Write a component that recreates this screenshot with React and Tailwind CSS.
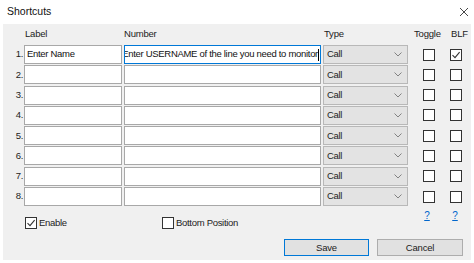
import React from "react";

const font = { fontFamily: '"Liberation Sans", Arial, sans-serif' };

function Check({ checked }) {
  return (
    <div className="w-[12px] h-[12px] border border-[#333] bg-white flex items-center justify-center">
      {checked && (
        <svg width="10" height="10" viewBox="0 0 10 10">
          <path d="M1.5 5.2 L4 7.6 L8.6 2.2" fill="none" stroke="#333" strokeWidth="1.1" />
        </svg>
      )}
    </div>
  );
}

function Row({ n, first }) {
  return (
    <div className="flex items-center h-[19px] text-[9.5px] tracking-[-0.3px]">
      <div className="w-[21px] text-right pr-[1px] text-[#222]">{n}.</div>
      <div className="w-[98px] h-[19px] bg-white border border-[#a8a8a8] flex items-center px-[2px] text-[#111] overflow-hidden whitespace-nowrap">
        {first ? "Enter Name" : ""}
      </div>
      <div
        className={
          "ml-[2px] w-[197px] h-[19px] bg-white border flex items-center justify-end px-[1px] text-[#111] overflow-hidden whitespace-nowrap " +
          (first ? "border-[#0078d7]" : "border-[#a8a8a8]")
        }
      >
        {first && (
          <>
            <span className="shrink-0">Enter USERNAME of the line you need to monitor</span>
            <span className="shrink-0 w-[1px] h-[12px] bg-black"></span>
          </>
        )}
      </div>
      <div className="ml-[2px] w-[85px] h-[19px] bg-[#e3e3e3] border border-[#b8b8b8] flex items-center justify-between pl-[3px] pr-[5px] text-[#222]">
        <span>Call</span>
        <svg width="8" height="5" viewBox="0 0 8 5">
          <path d="M0.5 0.5 L4 4 L7.5 0.5" fill="none" stroke="#777" strokeWidth="0.9" />
        </svg>
      </div>
      <div className="ml-[15px]">
        <Check checked={false} />
      </div>
      <div className="ml-[15px]">
        <Check checked={first} />
      </div>
    </div>
  );
}

export default function App() {
  return (
    <div className="w-[474px] h-[263px] bg-white overflow-hidden" style={font}>
      <div className="h-[24px] flex items-center justify-between pl-[7px] pr-[4px]">
        <span className="text-[10.5px] text-[#111]">Shortcuts</span>
        <svg width="10" height="10" viewBox="0 0 10 10" className="mr-[1px]">
          <path d="M1 1 L9 9 M9 1 L1 9" stroke="#333" strokeWidth="0.9" />
        </svg>
      </div>
      <div className="mx-[3px] h-[236px] bg-[#f0f0f0] flex flex-col text-[#222]">
        <div className="h-[21px] flex items-center text-[9.5px] tracking-[-0.2px]">
          <span className="ml-[22px] w-[99px]">Label</span>
          <span className="w-[200px]">Number</span>
          <span className="w-[90px]">Type</span>
          <span className="w-[37px]">Toggle</span>
          <span>BLF</span>
        </div>
        <div className="flex flex-col gap-[1.3px]">
          {[1, 2, 3, 4, 5, 6, 7, 8].map((n) => (
            <Row key={n} n={n} first={n === 1} />
          ))}
        </div>
        <div className="flex">
          <div className="flex items-center pt-[10px] text-[9.5px] tracking-[-0.3px]">
            <div className="ml-[22px] w-[137px] flex items-center">
              <Check checked={true} />
              <span className="ml-[2px]">Enable</span>
            </div>
            <Check checked={false} />
            <span className="ml-[2px]">Bottom Position</span>
          </div>
          <div className="ml-auto flex pt-[2px] text-[10px] text-[#0066cc] underline">
            <span className="w-[28px] text-center">?</span>
            <span className="w-[28px] text-center mr-[2px]">?</span>
          </div>
        </div>
        <div className="flex justify-end mt-[9px] pr-[8px] gap-[8px] text-[9.5px] tracking-[-0.2px]">
          <div className="w-[85px] h-[17px] bg-[#e1e1e1] border border-[#0078d7] flex items-center justify-center">Save</div>
          <div className="w-[86px] h-[17px] bg-[#e1e1e1] border border-[#adadad] flex items-center justify-center">Cancel</div>
        </div>
      </div>
    </div>
  );
}
